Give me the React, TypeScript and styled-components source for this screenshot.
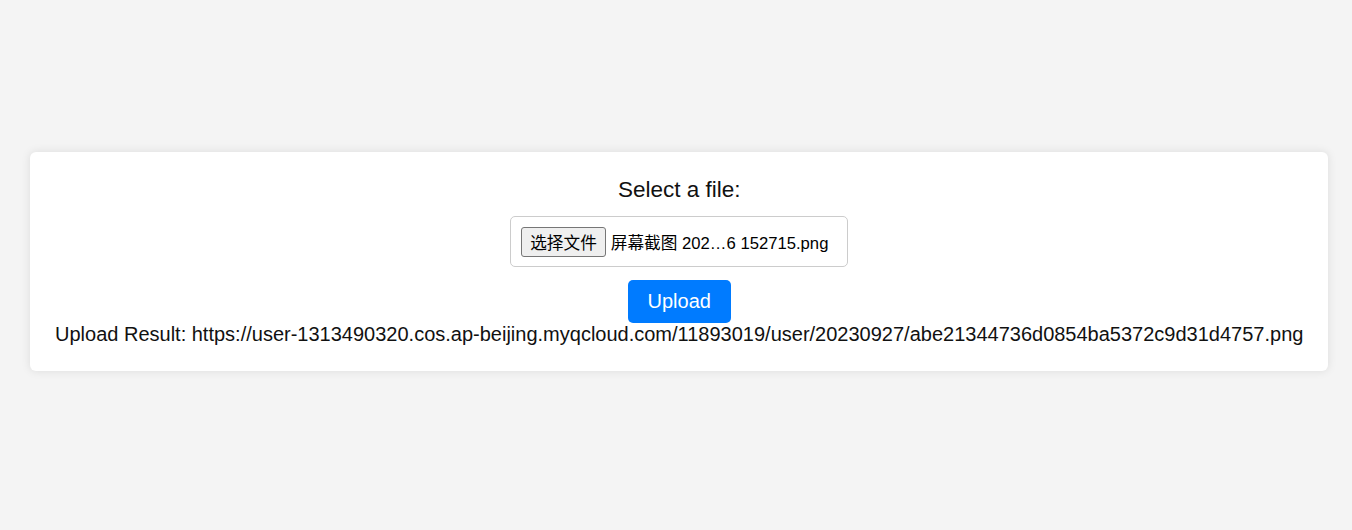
import React from 'react';
import styled, { createGlobalStyle } from 'styled-components';

const GlobalStyle = createGlobalStyle`
  html, body {
    margin: 0;
    padding: 0;
    background: #f4f4f4;
  }
  body {
    font-family: "Liberation Sans", Arial, "Noto Sans CJK SC", sans-serif;
    color: #111;
  }
`;

const Page = styled.div`
  display: flex;
  align-items: flex-start;
  min-height: 530px;
  box-sizing: border-box;
  padding: 152px 0 0 30px;
`;

const Card = styled.div`
  width: fit-content;
  background: #ffffff;
  border-radius: 6px;
  box-shadow: 0 0 10px rgba(0, 0, 0, 0.1);
  padding: 25px;
  text-align: center;
`;

const Label = styled.label`
  display: block;
  font-size: 22.5px;
  line-height: 25px;
  margin-bottom: 14px;
`;

const FileBox = styled.div`
  display: inline-flex;
  align-items: center;
  padding: 9px 10px;
  border: 1px solid #cccccc;
  border-radius: 5px;
  margin-bottom: 13px;
`;

const FilePicker = styled.div`
  display: flex;
  align-items: center;
  width: 316px;
  height: 31px;
  font-family: "Liberation Sans", Arial, "Noto Sans CJK SC", sans-serif;
  font-size: 16.67px;
  text-align: left;
`;

const PickButton = styled.span`
  display: inline-flex;
  align-items: center;
  justify-content: center;
  box-sizing: border-box;
  height: 30px;
  padding: 0 8px;
  border: 1px solid #767676;
  border-radius: 3px;
  background: #efefef;
  font-family: "Noto Sans CJK SC", sans-serif;
  font-size: 16.67px;
  color: #000;
  margin-right: 5px;
`;

const FileName = styled.span`
  white-space: nowrap;
  color: #000;
`;

const ButtonRow = styled.div`
  display: flex;
  justify-content: center;
`;

const UploadButton = styled.button`
  background: #007bff;
  color: #ffffff;
  border: none;
  border-radius: 5px;
  padding: 10px 20px;
  font-family: "Liberation Sans", Arial, sans-serif;
  font-size: 20px;
  line-height: 23px;
  cursor: pointer;
`;

const Result = styled.p`
  margin: 0;
  font-size: 20px;
  line-height: 23px;
  white-space: nowrap;
`;

const resultUrl =
  'https://user-1313490320.cos.ap-beijing.myqcloud.com/11893019/user/20230927/abe21344736d0854ba5372c9d31d4757.png';

const App: React.FC = () => {
  return (
    <>
      <GlobalStyle />
      <Page>
        <Card>
          <Label>Select a file:</Label>
          <FileBox>
            <FilePicker>
              <PickButton>选择文件</PickButton>
              <FileName>屏幕截图 202…6 152715.png</FileName>
            </FilePicker>
          </FileBox>
          <ButtonRow>
            <UploadButton>Upload</UploadButton>
          </ButtonRow>
          <Result>Upload Result: {resultUrl}</Result>
        </Card>
      </Page>
    </>
  );
};

export default App;
